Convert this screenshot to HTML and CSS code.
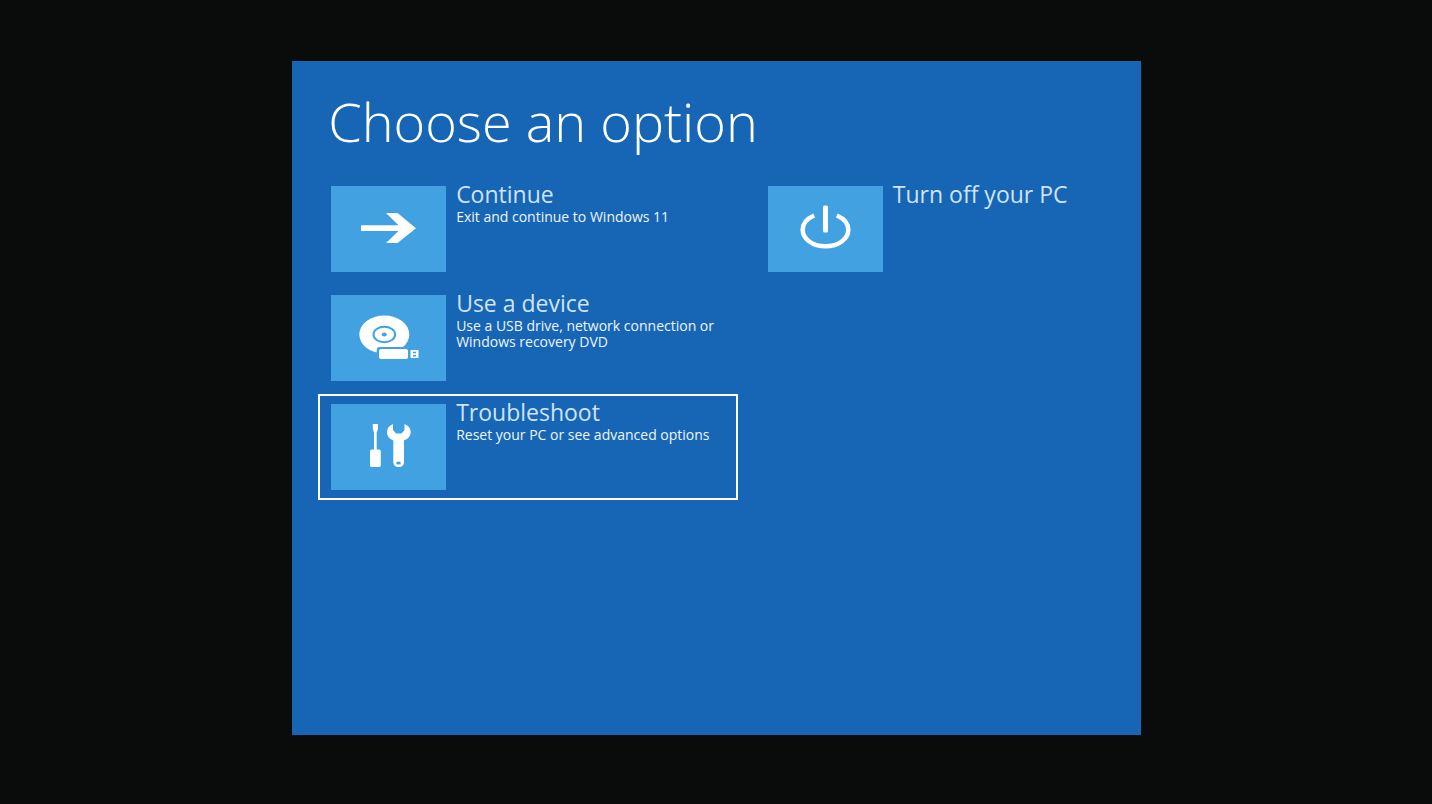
FILE: index.html
```html
<!DOCTYPE html>
<html lang="en">
<head>
<meta charset="utf-8">
<meta name="viewport" content="width=device-width, initial-scale=1">
<title>Choose an option</title>
<link rel="stylesheet" href="styles.css">
</head>
<body>
<main class="panel">
  <h1 class="title">Choose an option</h1>
  <div class="columns">
    <div class="column">
      <button class="option" type="button">
        <span class="tile">
          <svg class="icon" viewBox="0 0 115 86" aria-hidden="true"><path d="M30 39.2H67.500L55 27H66.500L85 42.200L66.500 57H55L67.500 45H30Z"/></svg>
        </span>
        <span class="text">
          <span class="name">Continue</span>
          <span class="detail">Exit and continue to Windows 11</span>
        </span>
      </button>
      <button class="option" type="button">
        <span class="tile">
          <svg class="icon" viewBox="0 0 115 86" aria-hidden="true">
            <ellipse cx="53.300" cy="39.500" rx="25" ry="19"/>
            <ellipse class="groove" cx="53.300" cy="39.500" rx="10.800" ry="7.800"/>
            <ellipse class="hole" cx="53.300" cy="39.500" rx="2.500" ry="1.900"/>
            <rect class="hole" x="45.700" y="52" width="33" height="14" rx="3"/>
            <rect x="48" y="54" width="29" height="10" rx="2"/>
            <rect x="79.500" y="55" width="8" height="8" rx="0.500"/>
            <path class="hole" d="M82 56.700h3v1.500h-3zM82 60h3v1.500h-3z"/>
          </svg>
        </span>
        <span class="text">
          <span class="name">Use a device</span>
          <span class="detail">Use a USB drive, network connection or Windows recovery DVD</span>
        </span>
      </button>
      <button class="option selected" type="button">
        <span class="tile">
          <svg class="icon" viewBox="0 0 115 86" aria-hidden="true">
            <path d="M41.800 20H47V25L45.700 28.500V45.500H48Q49.800 45.500 49.800 47V61.500Q49.800 63 48 63H40.800Q39 63 39 61.500V47Q39 45.500 40.800 45.500H43V28.500L41.800 25Z"/>
            <path d="M62 20V26L65 29.500H70.500L73.500 26V20C77.500 21.500 79.700 24.500 79.700 28C79.700 32 77 35 73 36.500V58C73 61 71 63 67.800 63C64.500 63 62.300 61 62.300 58V36.500C58.300 35 56 32 56 28C56 24.500 58 21.500 62 20Z"/>
            <ellipse class="hole" cx="67.500" cy="59" rx="2.300" ry="1.500"/>
          </svg>
        </span>
        <span class="text">
          <span class="name">Troubleshoot</span>
          <span class="detail">Reset your PC or see advanced options</span>
        </span>
      </button>
    </div>
    <div class="column">
      <button class="option" type="button">
        <span class="tile">
          <svg class="icon" viewBox="0 0 115 86" aria-hidden="true">
            <path class="stroke" d="M46.200 29.500C38 33 34.700 38 34.700 43.800C34.700 53 44.500 60.300 57.500 60.300C70.500 60.300 80.300 53 80.300 43.800C80.300 38 77 33 68.800 29.500"/>
            <rect x="55" y="19.500" width="5" height="27" rx="1.500"/>
          </svg>
        </span>
        <span class="text">
          <span class="name">Turn off your PC</span>
        </span>
      </button>
    </div>
  </div>
</main>
</body>
</html>
```
FILE: styles.css
```css
* {
  box-sizing: border-box;
}

body {
  display: flex;
  min-height: 100vh;
  margin: 0;
  padding: 61px 20.35% 69px 20.4%;
  background: #0a0c0b;
  color: #fff;
  font-family: "Open Sans", "Noto Sans", sans-serif;
}

.panel {
  flex: 1;
  padding: 24px 26px;
  background: #1765b5;
}

.title {
  margin: 0 0 19px;
  padding-left: 10px;
  font-size: 54px;
  font-weight: 300;
  line-height: 72px;
}

.columns {
  display: grid;
  grid-template-columns: 7fr 6fr;
  gap: 17px;
}

.column {
  display: flex;
  flex-direction: column;
  gap: 3px;
}

.option {
  display: flex;
  align-items: flex-start;
  gap: 10px;
  padding: 8px 11px;
  border: 2px solid transparent;
  background: none;
  color: inherit;
  font: inherit;
  text-align: left;
}

.selected {
  border-color: #fff;
}

.tile {
  flex: none;
  width: 115px;
  height: 86px;
  background: #42a1e1;
}

.icon {
  display: block;
  width: 100%;
  height: 100%;
  fill: #fff;
}

.hole {
  fill: #42a1e1;
}

.groove {
  fill: none;
  stroke: #42a1e1;
  stroke-width: 2;
}

.stroke {
  fill: none;
  stroke: #fff;
  stroke-width: 4.5;
}

.text {
  display: flex;
  flex-direction: column;
}

.name {
  color: #cfe4f8;
  font-size: 23px;
  font-weight: 400;
  line-height: 16px;
  margin-bottom: 7px;
}

.detail {
  color: #eef6fd;
  font-size: 14px;
  line-height: 16px;
}
```
